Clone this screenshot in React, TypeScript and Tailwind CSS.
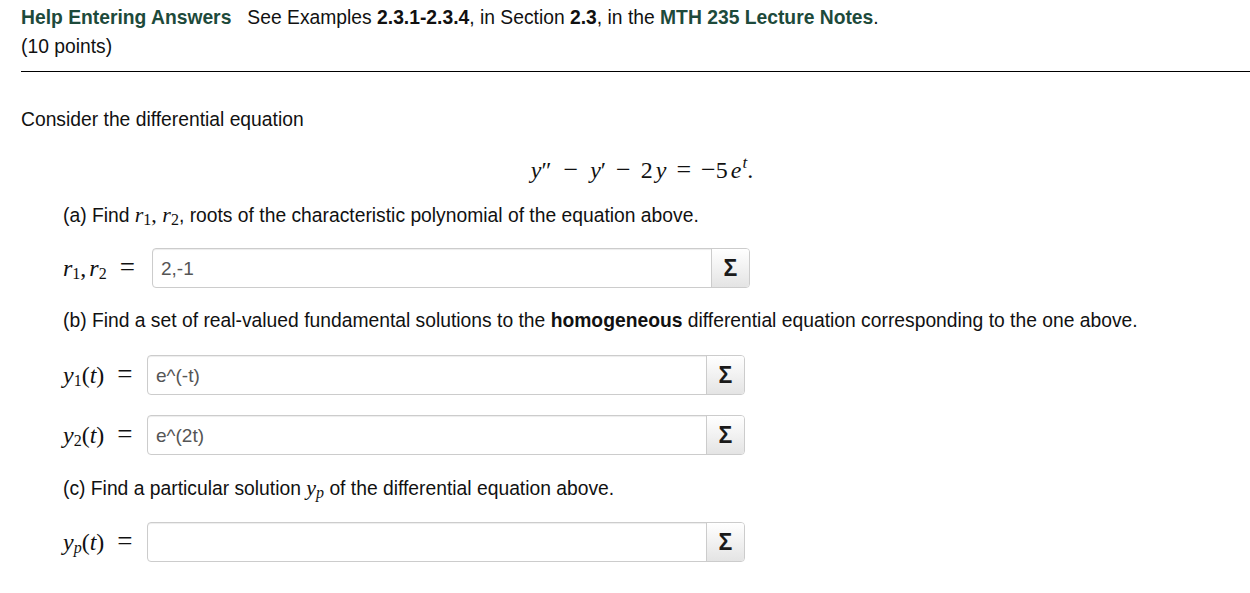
import React from 'react';

const serif = "font-['Liberation_Serif',serif]";

// italic math variable
const V: React.FC<{ children: React.ReactNode }> = ({ children }) => (
  <span className={`${serif} italic`}>{children}</span>
);

const Sub: React.FC<{ children: React.ReactNode; italic?: boolean }> = ({ children, italic }) => (
  <sub className={`${serif} text-[16px] ${italic ? 'italic' : 'not-italic'} relative top-[3px] align-baseline`}>
    {children}
  </sub>
);

const Eq: React.FC = () => <span className="ml-[13px] text-[27px]">=</span>;

type AnswerRowProps = {
  label: React.ReactNode;
  value: string;
  labelWidth: string;
};

const AnswerRow: React.FC<AnswerRowProps> = ({ label, value, labelWidth }) => {
  return (
    <div className="flex items-center h-[40px]">
      <div className={`${labelWidth} ${serif} text-[24px] text-[#111] whitespace-nowrap`}>{label}</div>
      <div className="flex w-[598px] h-[40px] border border-[#cccccc] rounded-[4px] shadow-[inset_0_1px_1px_rgba(0,0,0,0.075)] bg-white overflow-hidden">
        <input
          readOnly
          value={value}
          className="flex-1 px-[8px] text-[19px] text-[#555] outline-none bg-transparent font-['Liberation_Sans',Arial,sans-serif]"
        />
        <button className="w-[38px] border-l border-[#cccccc] bg-gradient-to-b from-white to-[#e4e4e4] flex items-center justify-center text-[23px] font-bold text-[#1a1a1a] font-['Liberation_Sans',Arial,sans-serif]">
          Σ
        </button>
      </div>
    </div>
  );
};

export default function App() {
  return (
    <div className="bg-white min-h-[593px] pl-[21px] text-[19.3px] leading-[29px] text-[#111] font-['Liberation_Sans',Arial,sans-serif]">
      {/* Header */}
      <div className="pt-[3px]">
        <div>
          <span className="font-bold text-[#1d4a3b]">Help Entering Answers</span>
          <span className="ml-[16px]">
            See Examples <b>2.3.1-2.3.4</b>, in Section <b>2.3</b>, in the{' '}
            <span className="font-bold text-[#1d4a3b]">MTH 235 Lecture Notes</span>.
          </span>
        </div>
        <div>(10 points)</div>
      </div>
      <div className="mt-[10px] h-[1px] bg-black" />

      {/* Problem */}
      <p className="mt-[33px]">Consider the differential equation</p>
      <div className={`mt-[21px] text-center pl-[13px] ${serif} text-[24px] leading-[29px]`}>
        <V>y</V>″ <span className="mx-[6px] text-[26px]">−</span> <V>y</V>′ <span className="mx-[4px] text-[26px]">−</span> 2
        <span className="ml-[3px]"><V>y</V></span> <span className="mx-[4px] text-[26px]">=</span>{' '}
        <span className="text-[26px]">−</span>5<span className="ml-[3px]"><V>e</V></span>
        <sup className="text-[17px] italic relative -top-[10px] align-baseline ml-[1px]">t</sup>.
      </div>

      <div className="pl-[42px]">
        <p className="mt-[15px]">
          (a) Find{' '}
          <span className={`${serif} text-[22px]`}>
            <V>r</V><Sub>1</Sub>, <V>r</V><Sub>2</Sub>
          </span>
          , roots of the characteristic polynomial of the equation above.
        </p>
        <div className="mt-[18px]">
          <AnswerRow
            labelWidth="w-[89px]"
            value="2,-1"
            label={
              <>
                <V>r</V><Sub>1</Sub>,<span className="ml-[3px]"><V>r</V></span><Sub>2</Sub>
                <Eq />
              </>
            }
          />
        </div>

        <p className="mt-[18px]">
          (b) Find a set of real-valued fundamental solutions to the <b>homogeneous</b> differential equation
          corresponding to the one above.
        </p>
        <div className="mt-[20px]">
          <AnswerRow
            labelWidth="w-[84px]"
            value="e^(-t)"
            label={
              <>
                <V>y</V><Sub>1</Sub>(<V>t</V>)
                <Eq />
              </>
            }
          />
        </div>
        <div className="mt-[20px]">
          <AnswerRow
            labelWidth="w-[84px]"
            value="e^(2t)"
            label={
              <>
                <V>y</V><Sub>2</Sub>(<V>t</V>)
                <Eq />
              </>
            }
          />
        </div>

        <p className="mt-[18px]">
          (c) Find a particular solution{' '}
          <span className={`${serif} text-[22px]`}>
            <V>y</V>
            <Sub italic>p</Sub>
          </span>{' '}
          of the differential equation above.
        </p>
        <div className="mt-[19px]">
          <AnswerRow
            labelWidth="w-[84px]"
            value=""
            label={
              <>
                <V>y</V>
                <Sub italic>p</Sub>(<V>t</V>)
                <Eq />
              </>
            }
          />
        </div>
      </div>
    </div>
  );
}
